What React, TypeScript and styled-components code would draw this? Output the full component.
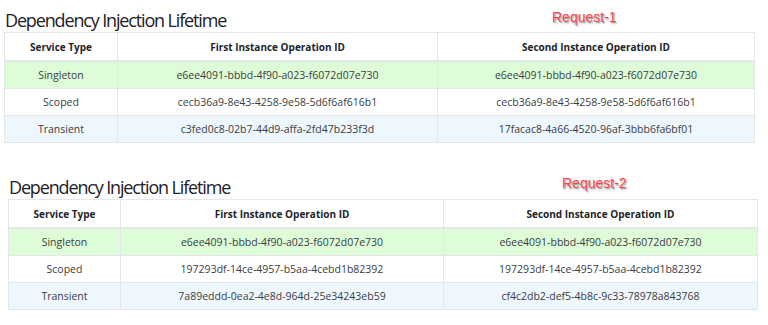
import React from "react";
import styled, { createGlobalStyle } from "styled-components";

const Global = createGlobalStyle`
  html, body { margin: 0; padding: 0; background: #ffffff; }
  body { font-family: "Open Sans", "Noto Sans", sans-serif; color: #212529; }
`;

const Page = styled.div`
  width: 768px;
  height: 325px;
  overflow: hidden;
  display: flex;
  flex-direction: column;
`;

const Section = styled.section<{ $left: number; $top: number; $width: number }>`
  position: relative;
  margin-left: ${(p) => p.$left}px;
  margin-top: ${(p) => p.$top}px;
  width: ${(p) => p.$width}px;
`;

const Title = styled.h2`
  margin: 0 0 0 1px;
  font-family: "Open Sans", "Noto Sans", sans-serif;
  font-size: 18px;
  font-weight: 500;
  letter-spacing: -1.15px;
  line-height: 24px;
  height: 24px;
  color: #1e2125;
`;

const RequestTag = styled.span<{ $x: number; $y: number }>`
  position: absolute;
  left: ${(p) => p.$x}px;
  top: ${(p) => p.$y}px;
  font-family: "Liberation Sans", Arial, sans-serif;
  font-size: 14px;
  line-height: 16px;
  color: #f2434a;
  text-shadow: 0 0 1px #fff, 1px 1px 1px rgba(0, 0, 0, 0.35), 1px 2px 2px rgba(0, 0, 0, 0.2);
`;

const Table = styled.table`
  width: 100%;
  border-collapse: collapse;
  table-layout: fixed;
  font-size: 10.5px;
  border: 1px solid #e3e6ea;
`;

const HeadCell = styled.th`
  height: 27px;
  padding: 0;
  font-size: 10px;
  font-weight: 700;
  text-align: center;
  color: #212529;
  background: #ffffff;
  border: 1px solid #e3e6ea;
  border-bottom-width: 2px;
`;

const Row = styled.tr<{ $tone: "green" | "white" | "blue" }>`
  background: ${(p) => (p.$tone === "green" ? "#dffcd9" : p.$tone === "blue" ? "#eef6fe" : "#ffffff")};
`;

const Cell = styled.td`
  height: 26px;
  padding: 0;
  text-align: center;
  color: #3a3d40;
  border: 1px solid #e3e6ea;
`;

type RowData = { type: string; first: string; second: string; tone: "green" | "white" | "blue" };

const panels: {
  left: number;
  top: number;
  width: number;
  cols: [number, number];
  tag: string;
  tagX: number;
  tagY: number;
  rows: RowData[];
}[] = [
  {
    left: 4,
    top: 8,
    width: 751,
    cols: [113, 320],
    tag: "Request-1",
    tagX: 548,
    tagY: 1,
    rows: [
      { type: "Singleton", first: "e6ee4091-bbbd-4f90-a023-f6072d07e730", second: "e6ee4091-bbbd-4f90-a023-f6072d07e730", tone: "green" },
      { type: "Scoped", first: "cecb36a9-8e43-4258-9e58-5d6f6af616b1", second: "cecb36a9-8e43-4258-9e58-5d6f6af616b1", tone: "white" },
      { type: "Transient", first: "c3fed0c8-02b7-44d9-affa-2fd47b233f3d", second: "17facac8-4a66-4520-96af-3bbb6fa6bf01", tone: "blue" },
    ],
  },
  {
    left: 8,
    top: 32,
    width: 750,
    cols: [112, 323],
    tag: "Request-2",
    tagX: 554,
    tagY: 0,
    rows: [
      { type: "Singleton", first: "e6ee4091-bbbd-4f90-a023-f6072d07e730", second: "e6ee4091-bbbd-4f90-a023-f6072d07e730", tone: "green" },
      { type: "Scoped", first: "197293df-14ce-4957-b5aa-4cebd1b82392", second: "197293df-14ce-4957-b5aa-4cebd1b82392", tone: "white" },
      { type: "Transient", first: "7a89eddd-0ea2-4e8d-964d-25e34243eb59", second: "cf4c2db2-def5-4b8c-9c33-78978a843768", tone: "blue" },
    ],
  },
];

export default function App() {
  return (
    <Page>
      <Global />
      {panels.map((p) => (
        <Section key={p.tag} $left={p.left} $top={p.top} $width={p.width}>
          <Title>Dependency Injection Lifetime</Title>
          <RequestTag $x={p.tagX} $y={p.tagY}>{p.tag}</RequestTag>
          <Table>
            <colgroup>
              <col style={{ width: p.cols[0] }} />
              <col style={{ width: p.cols[1] }} />
              <col />
            </colgroup>
            <thead>
              <tr>
                <HeadCell>Service Type</HeadCell>
                <HeadCell>First Instance Operation ID</HeadCell>
                <HeadCell>Second Instance Operation ID</HeadCell>
              </tr>
            </thead>
            <tbody>
              {p.rows.map((r) => (
                <Row key={r.type} $tone={r.tone}>
                  <Cell>{r.type}</Cell>
                  <Cell>{r.first}</Cell>
                  <Cell>{r.second}</Cell>
                </Row>
              ))}
            </tbody>
          </Table>
        </Section>
      ))}
    </Page>
  );
}
